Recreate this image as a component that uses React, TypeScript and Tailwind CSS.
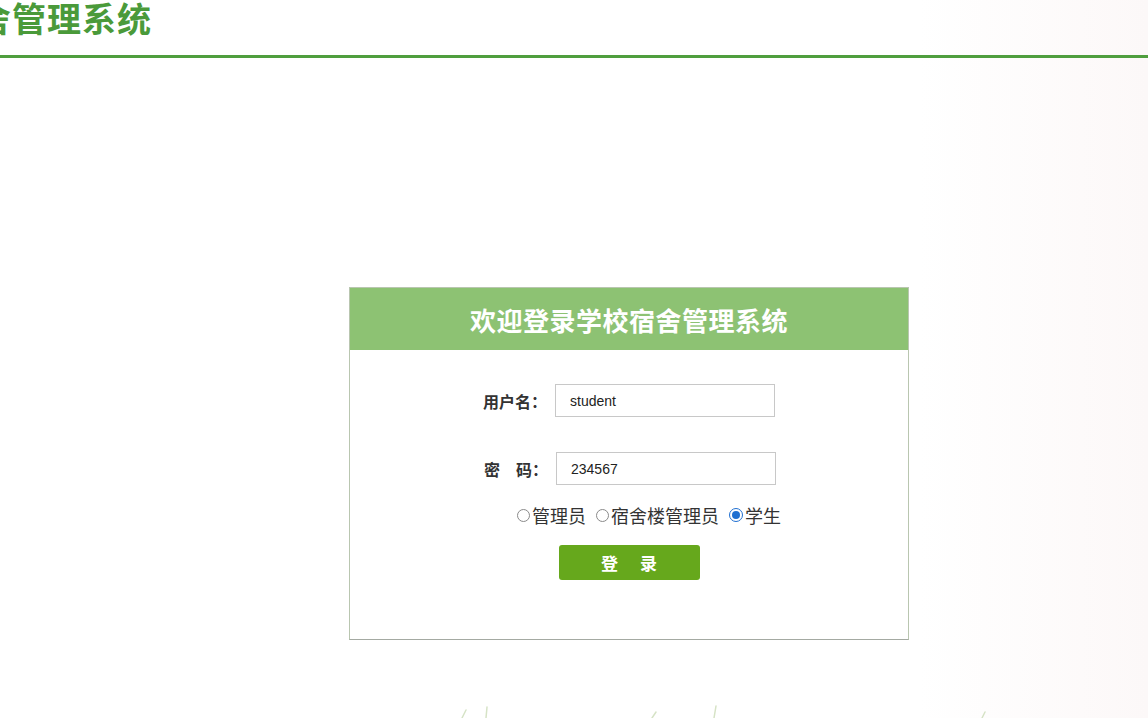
import { useState } from 'react';

const ROLES = ['管理员', '宿舍楼管理员', '学生'];

const Radio = ({ checked }: { checked: boolean }) =>
    checked ? (
        <span className="w-[14px] h-[14px] rounded-full border border-[#1f6fd1] flex items-center justify-center bg-white shrink-0">
            <span className="w-[8px] h-[8px] rounded-full bg-[#1f6fd1]" />
        </span>
    ) : (
        <span className="w-[13px] h-[13px] rounded-full border border-[#8a8a8a] bg-white shrink-0" />
    );

export default function App() {
    const [role, setRole] = useState(2);

    return (
        <div
            className="w-[1148px] h-[718px] overflow-hidden bg-gradient-to-r from-white via-white via-80% to-[#fcf8f8] flex flex-col"
            style={{ fontFamily: '"Noto Sans CJK SC", "Noto Sans", sans-serif' }}
        >
            {/* page header */}
            <div className="h-[58px] border-b-[3px] border-[#4f9e3e] overflow-hidden shrink-0">
                <h1 className="ml-[-128px] mt-[-1px] text-[34px] leading-[38px] font-bold text-[#4a9a3a] tracking-[1px] whitespace-nowrap">
                    学校宿舍管理系统
                </h1>
            </div>

            {/* login card */}
            <div className="ml-[349px] mt-[229px] w-[560px] border border-[#b9c6b0] border-b-[#a4aaa2] bg-white">
                <div className="h-[62px] bg-[#8dc273] flex items-center justify-center">
                    <h2 className="text-[26px] font-bold text-white tracking-[0.5px]">欢迎登录学校宿舍管理系统</h2>
                </div>

                <div className="h-[289px] flex flex-col items-center pt-[34px]">
                    <div className="flex items-center gap-[8px]">
                        <label className="w-[64px] text-right text-[16px] font-bold text-[#333]">用户名：</label>
                        <input
                            defaultValue="student"
                            className="w-[220px] h-[33px] border border-[#c8c8c8] px-[14px] text-[14px] text-[#222] outline-none"
                            style={{ fontFamily: '"Liberation Sans", Arial, sans-serif' }}
                        />
                    </div>

                    <div className="flex items-center gap-[8px] mt-[35px] ml-[2px]">
                        <label className="w-[64px] flex justify-between text-[16px] font-bold text-[#333]">
                            <span>密</span>
                            <span>码：</span>
                        </label>
                        <input
                            defaultValue="234567"
                            className="w-[220px] h-[33px] border border-[#c8c8c8] px-[14px] text-[14px] text-[#222] outline-none"
                            style={{ fontFamily: '"Liberation Sans", Arial, sans-serif' }}
                        />
                    </div>

                    <div className="flex items-center gap-[10px] mt-[17px] ml-[40px] text-[18px] leading-[26px] text-[#333]">
                        {ROLES.map((r, i) => (
                            <button key={r} onClick={() => setRole(i)} className="flex items-center gap-[2px]">
                                <Radio checked={role === i} />
                                <span>{r}</span>
                            </button>
                        ))}
                    </div>

                    <button className="mt-[17px] w-[141px] h-[35px] rounded-[3px] bg-[#66a81c] text-white text-[17px] font-bold tracking-[22px] pl-[22px]">
                        登录
                    </button>
                </div>
            </div>

            {/* faint grass at the bottom */}
            <svg className="mt-auto shrink-0" width="1148" height="14" viewBox="0 0 1148 14">
                <g stroke="#d6e3c6" strokeWidth="1.5" fill="none" strokeLinecap="round">
                    <path d="M462 14 L466 6" />
                    <path d="M486 14 L487 3" />
                    <path d="M652 14 L656 8" />
                    <path d="M714 14 L716 2" />
                    <path d="M982 14 L985 8" />
                </g>
            </svg>
        </div>
    );
}
